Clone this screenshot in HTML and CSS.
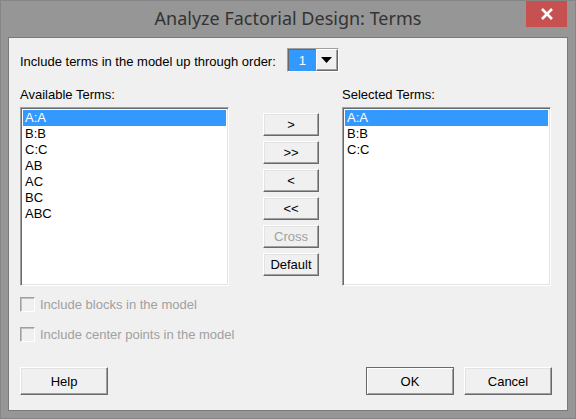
FILE: index.html
```html
<!DOCTYPE html>
<html>
<head>
<meta charset="utf-8">
<link rel="stylesheet" href="styles.css">
</head>
<body>
<div class="window">
  <div class="titlebar">
    <div class="title">Analyze Factorial Design: Terms</div>
    <div class="close">
      <svg width="14" height="12" viewBox="0 0 14 12"><path d="M2 1 L12 11 M12 1 L2 11" stroke="#fff" stroke-width="2.6" fill="none"/></svg>
    </div>
  </div>
  <div class="client">
    <div class="order-row">
      <span class="label">Include terms in the model up through order:</span>
      <div class="combo">
        <div class="combo-field">1</div>
        <div class="combo-btn">
          <svg width="11" height="6" viewBox="0 0 11 6"><path d="M0 0 H11 L5.5 6 Z" fill="#000"/></svg>
        </div>
      </div>
    </div>
    <div class="terms">
      <div class="col-label">Available Terms:</div>
      <div class="spacer"></div>
      <div class="col-label">Selected Terms:</div>
      <div class="listbox">
        <div class="item sel">A:A</div>
        <div class="item">B:B</div>
        <div class="item">C:C</div>
        <div class="item">AB</div>
        <div class="item">AC</div>
        <div class="item">BC</div>
        <div class="item">ABC</div>
      </div>
      <div class="move-btns">
        <div class="btn small">&gt;</div>
        <div class="btn small">&gt;&gt;</div>
        <div class="btn small">&lt;</div>
        <div class="btn small">&lt;&lt;</div>
        <div class="btn small disabled">Cross</div>
        <div class="btn small">Default</div>
      </div>
      <div class="listbox">
        <div class="item sel">A:A</div>
        <div class="item">B:B</div>
        <div class="item">C:C</div>
      </div>
    </div>
    <div class="check-row first"><span class="checkbox"></span><span class="disabled-text">Include blocks in the model</span></div>
    <div class="check-row"><span class="checkbox"></span><span class="disabled-text">Include center points in the model</span></div>
    <div class="bottom">
      <div class="btn big">Help</div>
      <div class="bottom-right">
        <div class="btn big default">OK</div>
        <div class="btn big">Cancel</div>
      </div>
    </div>
  </div>
</div>
</body>
</html>
```
FILE: styles.css
```css
html, body { margin: 0; padding: 0; }
body { width: 576px; height: 419px; overflow: hidden; background: #969696; }
.window {
  width: 576px; height: 419px; box-sizing: border-box;
  background: #969696;
  border: 1px solid #858585;
  display: flex; flex-direction: column;
}
.titlebar {
  height: 36px; position: relative;
  display: flex; justify-content: center; align-items: center;
}
.title {
  font-family: "Noto Sans", "Open Sans", sans-serif;
  font-size: 18px; color: #333333;
  padding-bottom: 2px;
}
.close {
  position: absolute; right: 8px; top: 0;
  width: 41px; height: 26px; background: #c75050;
  display: flex; align-items: center; justify-content: center;
}
.client {
  margin: 0 7px 7px 7px;
  flex: 1;
  background: #f0f0f0;
  border: 1px solid #7a7a7a;
  padding: 10px 15px 0 11px;
  font-family: "Liberation Sans", Arial, sans-serif;
  font-size: 13px; color: #000;
  display: flex; flex-direction: column;
}
.order-row { display: flex; align-items: center; height: 24px; }
.order-row .label { margin-top: 2px; }
.combo {
  margin-left: 11px;
  width: 52px; height: 24px; box-sizing: border-box;
  border: 1px solid; border-color: #a0a0a0 #fff #fff #a0a0a0;
  display: flex;
}
.combo > * { box-sizing: border-box; }
.combo-field {
  flex: 1; background: #3399ff; color: #fff;
  border-top: 1px solid #696969; border-left: 1px solid #696969;
  display: flex; align-items: center; justify-content: center;
}
.combo-btn {
  width: 22px; background: #f0f0f0;
  border: 1px solid; border-color: #fff #696969 #696969 #fff;
  box-shadow: inset -1px -1px 0 #a0a0a0;
  display: flex; align-items: center; justify-content: center;
}
.terms {
  margin-top: 15px;
  display: grid;
  grid-template-columns: 209px 34px 56px 23px 209px;
  grid-template-rows: 20px 179px;
}
.terms .col-label:first-child { grid-column: 1; }
.terms .spacer { grid-column: 2 / 5; }
.terms .col-label:nth-child(3) { grid-column: 5; }
.col-label { line-height: 16px; }
.listbox {
  background: #fff; box-sizing: border-box;
  border: 1px solid; border-color: #a0a0a0 #fff #fff #a0a0a0;
  box-shadow: inset 1px 1px 0 #696969, inset -1px -1px 0 #e3e3e3;
  padding: 2px 2px;
}
.terms .listbox:nth-child(4) { grid-column: 1; }
.terms .move-btns { grid-column: 3; }
.terms .listbox:nth-child(6) { grid-column: 5; }
.item { line-height: 16px; height: 16px; padding-left: 2px; white-space: nowrap; }
.item.sel { background: #3399ff; color: #fff; }
.move-btns { display: flex; flex-direction: column; gap: 5px; padding-top: 6px; }
.btn {
  box-sizing: border-box; background: #f0f0f0;
  border: 1px solid; border-color: #fff #696969 #696969 #fff;
  box-shadow: inset -1px -1px 0 #a0a0a0, inset 1px 1px 0 #e3e3e3;
  display: flex; align-items: center; justify-content: center;
}
.btn.small { height: 23px; }
.btn.big { width: 88px; height: 28px; }
.btn.default { border-color: #696969; box-shadow: inset 1px 1px 0 #fff, inset -1px -1px 0 #a0a0a0; }
.btn.disabled { color: #a0a0a0; }
.check-row { display: flex; align-items: center; height: 15px; margin-top: 15px; }
.check-row.first { margin-top: 11px; }
.checkbox {
  width: 15px; height: 15px; box-sizing: border-box;
  border: 1px solid; border-color: #a0a0a0 #fff #fff #a0a0a0;
  box-shadow: inset 1px 1px 0 #c0c0c0;
  background: #f0f0f0; margin-right: 5px;
}
.disabled-text { color: #a0a0a0; }
.bottom { margin-top: 25px; display: flex; justify-content: space-between; }
.bottom-right { display: flex; gap: 10px; }
```
